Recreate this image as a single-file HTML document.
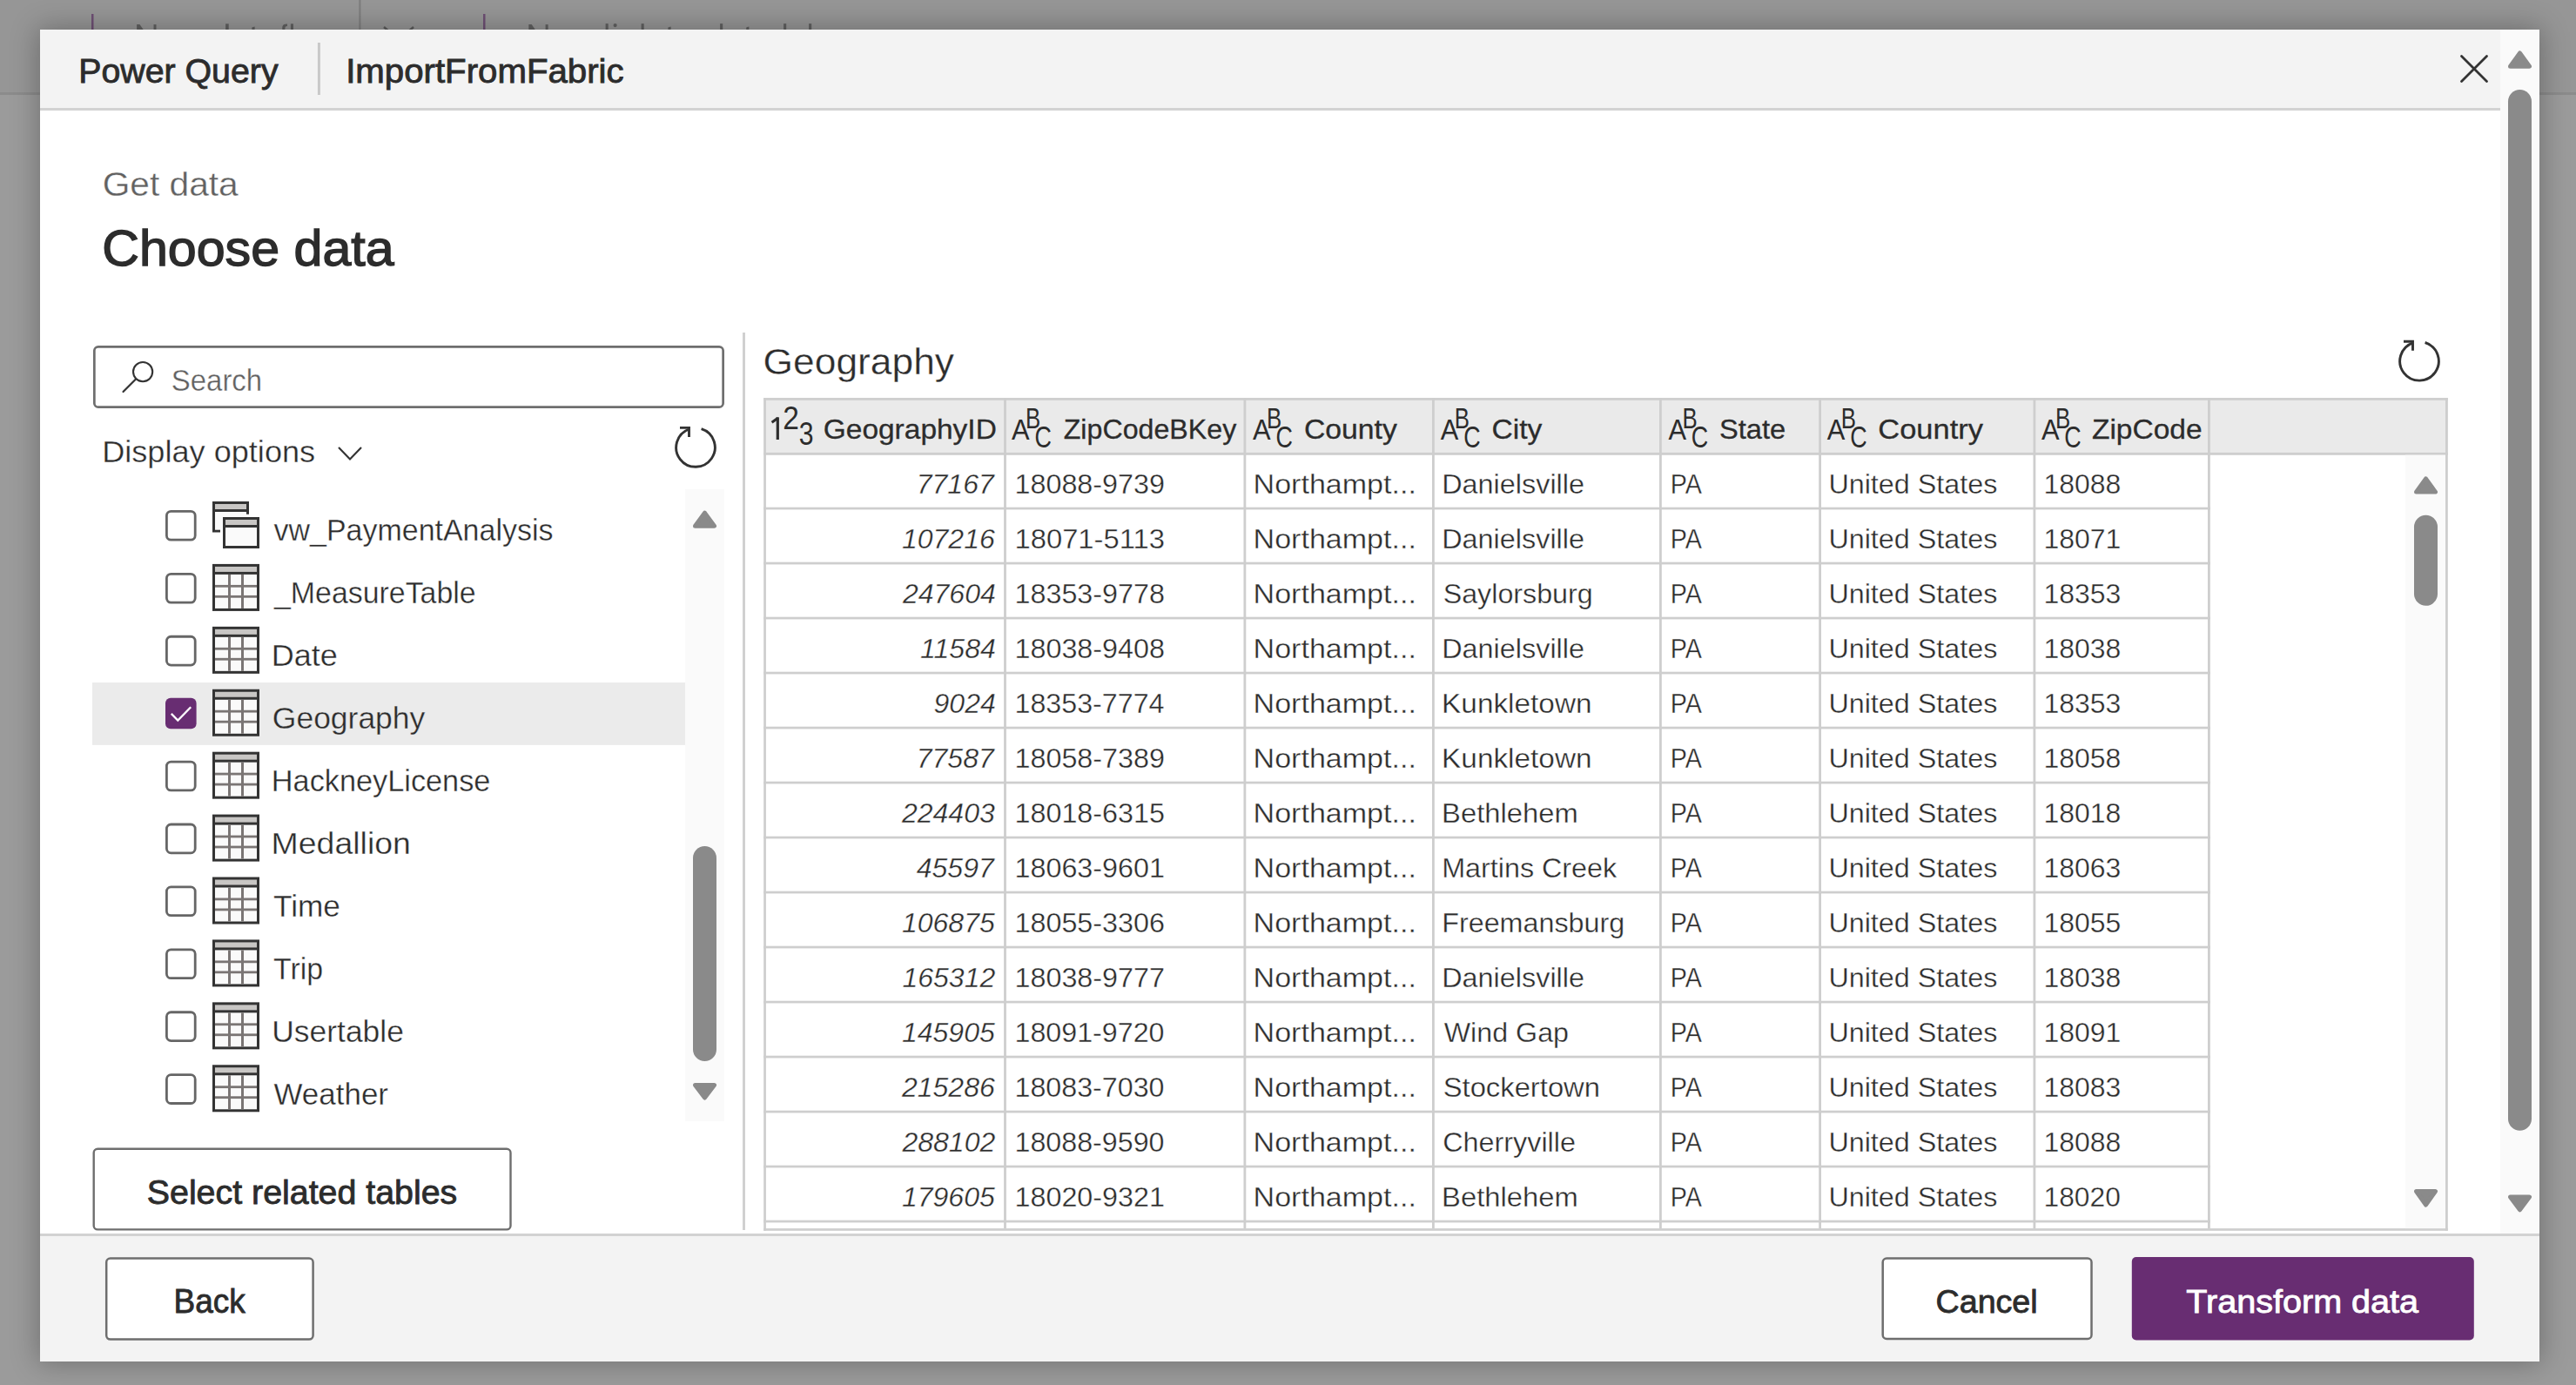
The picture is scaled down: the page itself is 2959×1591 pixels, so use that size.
<!DOCTYPE html>
<html><head><meta charset="utf-8"><title>Choose data</title>
<style>
html,body{margin:0;padding:0;}
body{width:2959px;height:1591px;overflow:hidden;background:#9b9b9b;position:relative;font-family:"Liberation Sans",sans-serif;}
#bg{position:absolute;left:0;top:0;}
#modal{position:absolute;left:46px;top:34px;width:2871px;height:1530px;background:#fff;box-shadow:0 0 30px 2px rgba(0,0,0,0.28);}
#fg{position:absolute;left:0;top:0;}
</style></head><body>
<svg id="bg" width="2959" height="1591" font-family="Liberation Sans"><rect x="0" y="0" width="2959" height="107" fill="#969696"/><rect x="0" y="106.2" width="2959" height="2.8" fill="#8b8b8b"/><rect x="105" y="16" width="2.5" height="30" fill="#6e4f74"/><rect x="555" y="16" width="2.5" height="30" fill="#6e4f74"/><rect x="412.3" y="0" width="2.2" height="60" fill="#7e7e7e"/><path d="M157.1 40 L157.1 28.1 L160.5 28.1 L166 36 L166 40 Z" fill="#606060"/><rect x="176.5" y="28.1" width="3" height="11.899999999999999" fill="#606060"/><rect x="259.1" y="27.3" width="3.6" height="12.7" fill="#606060"/><path d="M289.4 40 L289.4 31.5 L292.6 30.6 L292.6 40 Z" fill="#606060"/><path d="M324.3 40 L324.3 31 Q324.8 27.6 329.5 27.6 L330 27.6 L330 30 Q327.4 30 327.4 32 L327.4 40 Z" fill="#606060"/><rect x="333.9" y="27.3" width="3.1" height="12.7" fill="#606060"/><path d="M607.3 40 L607.3 28.1 L610.7 28.1 L616 36 L616 40 Z" fill="#606060"/><rect x="626.6" y="28.1" width="3" height="11.899999999999999" fill="#606060"/><rect x="695.6" y="27.1" width="3.1" height="12.899999999999999" fill="#606060"/><circle cx="706.6" cy="29.1" r="2.1" fill="#606060"/><rect x="736.6" y="27.1" width="3.1" height="12.899999999999999" fill="#606060"/><path d="M767.4 40 L767.4 31.5 L770.6 30.4 L770.6 40 Z" fill="#606060"/><rect x="827.1" y="27.1" width="3.1" height="12.899999999999999" fill="#606060"/><path d="M857.2 40 L857.2 31.5 L860.4 30.4 L860.4 40 Z" fill="#606060"/><rect x="900.1" y="27.1" width="3.1" height="12.899999999999999" fill="#606060"/><rect x="929.1" y="27.1" width="3.1" height="12.899999999999999" fill="#606060"/><path d="M441 31 L458 46 L475 31" stroke="#5c5c5c" stroke-width="2.5" fill="none"/></svg>
<div id="modal"></div>
<svg id="fg" width="2959" height="1591" font-family="Liberation Sans">
<rect x="46" y="34" width="2826" height="90" fill="#f3f3f3" />
<rect x="46" y="124" width="2826" height="3" fill="#d2d2d2" />
<rect x="364.9" y="49" width="3" height="60" fill="#c8c8c8" />
<path d="M2827.5 64.5 L2856.5 93.5 M2856.5 64.5 L2827.5 93.5" stroke="#333" stroke-width="2.8" stroke-linecap="round" fill="none"/>
<rect x="2872" y="34" width="45" height="1383" fill="#fafafa" />
<rect x="2881" y="103" width="27" height="1195.7" fill="#8a8a8a" rx="13.5"/>
<path d="M2894.50 61.00 L2905.50 76.20 L2883.50 76.20 Z" fill="#8a8a8a" stroke="#8a8a8a" stroke-width="5.0" stroke-linejoin="round"/>
<path d="M2894.50 1389.80 L2905.50 1375.00 L2883.50 1375.00 Z" fill="#8a8a8a" stroke="#8a8a8a" stroke-width="5.0" stroke-linejoin="round"/>
<rect x="108.35" y="398.35" width="722.3" height="69.3" rx="4.5" fill="#fff" stroke="#6e6e6e" stroke-width="2.7"/>
<circle cx="164.1" cy="427.1" r="11.1" fill="none" stroke="#333" stroke-width="2.1"/>
<path d="M156 435.5 L141.5 450" stroke="#333" stroke-width="2.2" stroke-linecap="round"/>
<path d="M389 514 L402 527.5 L415 514" stroke="#333" stroke-width="2.2" fill="none" stroke-linejoin="miter"/>
<path d="M805.60 492.70 A22.3 22.3 0 1 1 791.50 493.00" stroke="#333" stroke-width="2.9" fill="none"/><path d="M781.00 491.40 L791.50 491.40 L791.50 501.90" stroke="#333" stroke-width="2.9" fill="none" stroke-linejoin="miter"/>
<rect x="787" y="562" width="45" height="726" fill="#fafafa" />
<rect x="796" y="972" width="27" height="247" fill="#8a8a8a" rx="13.5"/>
<path d="M809.50 589.10 L820.50 604.20 L798.50 604.20 Z" fill="#8a8a8a" stroke="#8a8a8a" stroke-width="5.0" stroke-linejoin="round"/>
<path d="M809.50 1261.00 L820.50 1246.40 L798.50 1246.40 Z" fill="#8a8a8a" stroke="#8a8a8a" stroke-width="5.0" stroke-linejoin="round"/>
<rect x="106" y="783.96" width="681" height="71.92" fill="#ebebeb" />
<rect x="191.4" y="587.40" width="32.8" height="32.8" rx="5" fill="#fff" stroke="#666" stroke-width="2.8"/>
<path d="M244 576.0 H286 V590.8 H283 V588.0 H247 V608.4 H253 V611.4 H244 Z" fill="#333"/><rect x="247" y="579.0" width="36" height="6" fill="#c8c6c4"/><rect x="247" y="588.0" width="36" height="6" fill="#fafafa"/><rect x="247" y="588.0" width="9" height="20.4" fill="#fafafa"/><rect x="256" y="594.0" width="42" height="36" fill="#333"/><rect x="259" y="597.0" width="36" height="6" fill="#c8c6c4"/><rect x="259" y="606.0" width="36" height="21" fill="#fafafa"/>
<rect x="191.4" y="659.32" width="32.8" height="32.8" rx="5" fill="#fff" stroke="#666" stroke-width="2.8"/>
<rect x="244" y="647.92" width="54" height="54" fill="#333"/><rect x="247" y="650.92" width="48" height="6" fill="#c8c6c4"/><rect x="247" y="659.92" width="48" height="39" fill="#fafafa"/><rect x="262" y="659.92" width="3" height="39" fill="#7a7574"/><rect x="277" y="659.92" width="3" height="39" fill="#7a7574"/><rect x="247" y="671.92" width="48" height="2.8" fill="#7a7574"/><rect x="247" y="683.92" width="48" height="2.8" fill="#7a7574"/>
<rect x="191.4" y="731.24" width="32.8" height="32.8" rx="5" fill="#fff" stroke="#666" stroke-width="2.8"/>
<rect x="244" y="719.84" width="54" height="54" fill="#333"/><rect x="247" y="722.84" width="48" height="6" fill="#c8c6c4"/><rect x="247" y="731.84" width="48" height="39" fill="#fafafa"/><rect x="262" y="731.84" width="3" height="39" fill="#7a7574"/><rect x="277" y="731.84" width="3" height="39" fill="#7a7574"/><rect x="247" y="743.84" width="48" height="2.8" fill="#7a7574"/><rect x="247" y="755.84" width="48" height="2.8" fill="#7a7574"/>
<rect x="190" y="801.76" width="35.6" height="35.6" rx="6" fill="#682d72"/>
<path d="M196.8 819.86 L204.3 827.66 L219.2 812.26" stroke="#fff" stroke-width="2.3" fill="none"/>
<rect x="244" y="791.76" width="54" height="54" fill="#333"/><rect x="247" y="794.76" width="48" height="6" fill="#c8c6c4"/><rect x="247" y="803.76" width="48" height="39" fill="#fafafa"/><rect x="262" y="803.76" width="3" height="39" fill="#7a7574"/><rect x="277" y="803.76" width="3" height="39" fill="#7a7574"/><rect x="247" y="815.76" width="48" height="2.8" fill="#7a7574"/><rect x="247" y="827.76" width="48" height="2.8" fill="#7a7574"/>
<rect x="191.4" y="875.08" width="32.8" height="32.8" rx="5" fill="#fff" stroke="#666" stroke-width="2.8"/>
<rect x="244" y="863.6800000000001" width="54" height="54" fill="#333"/><rect x="247" y="866.6800000000001" width="48" height="6" fill="#c8c6c4"/><rect x="247" y="875.6800000000001" width="48" height="39" fill="#fafafa"/><rect x="262" y="875.6800000000001" width="3" height="39" fill="#7a7574"/><rect x="277" y="875.6800000000001" width="3" height="39" fill="#7a7574"/><rect x="247" y="887.6800000000001" width="48" height="2.8" fill="#7a7574"/><rect x="247" y="899.6800000000001" width="48" height="2.8" fill="#7a7574"/>
<rect x="191.4" y="947.00" width="32.8" height="32.8" rx="5" fill="#fff" stroke="#666" stroke-width="2.8"/>
<rect x="244" y="935.6" width="54" height="54" fill="#333"/><rect x="247" y="938.6" width="48" height="6" fill="#c8c6c4"/><rect x="247" y="947.6" width="48" height="39" fill="#fafafa"/><rect x="262" y="947.6" width="3" height="39" fill="#7a7574"/><rect x="277" y="947.6" width="3" height="39" fill="#7a7574"/><rect x="247" y="959.6" width="48" height="2.8" fill="#7a7574"/><rect x="247" y="971.6" width="48" height="2.8" fill="#7a7574"/>
<rect x="191.4" y="1018.92" width="32.8" height="32.8" rx="5" fill="#fff" stroke="#666" stroke-width="2.8"/>
<rect x="244" y="1007.52" width="54" height="54" fill="#333"/><rect x="247" y="1010.52" width="48" height="6" fill="#c8c6c4"/><rect x="247" y="1019.52" width="48" height="39" fill="#fafafa"/><rect x="262" y="1019.52" width="3" height="39" fill="#7a7574"/><rect x="277" y="1019.52" width="3" height="39" fill="#7a7574"/><rect x="247" y="1031.52" width="48" height="2.8" fill="#7a7574"/><rect x="247" y="1043.52" width="48" height="2.8" fill="#7a7574"/>
<rect x="191.4" y="1090.84" width="32.8" height="32.8" rx="5" fill="#fff" stroke="#666" stroke-width="2.8"/>
<rect x="244" y="1079.44" width="54" height="54" fill="#333"/><rect x="247" y="1082.44" width="48" height="6" fill="#c8c6c4"/><rect x="247" y="1091.44" width="48" height="39" fill="#fafafa"/><rect x="262" y="1091.44" width="3" height="39" fill="#7a7574"/><rect x="277" y="1091.44" width="3" height="39" fill="#7a7574"/><rect x="247" y="1103.44" width="48" height="2.8" fill="#7a7574"/><rect x="247" y="1115.44" width="48" height="2.8" fill="#7a7574"/>
<rect x="191.4" y="1162.76" width="32.8" height="32.8" rx="5" fill="#fff" stroke="#666" stroke-width="2.8"/>
<rect x="244" y="1151.36" width="54" height="54" fill="#333"/><rect x="247" y="1154.36" width="48" height="6" fill="#c8c6c4"/><rect x="247" y="1163.36" width="48" height="39" fill="#fafafa"/><rect x="262" y="1163.36" width="3" height="39" fill="#7a7574"/><rect x="277" y="1163.36" width="3" height="39" fill="#7a7574"/><rect x="247" y="1175.36" width="48" height="2.8" fill="#7a7574"/><rect x="247" y="1187.36" width="48" height="2.8" fill="#7a7574"/>
<rect x="191.4" y="1234.68" width="32.8" height="32.8" rx="5" fill="#fff" stroke="#666" stroke-width="2.8"/>
<rect x="244" y="1223.28" width="54" height="54" fill="#333"/><rect x="247" y="1226.28" width="48" height="6" fill="#c8c6c4"/><rect x="247" y="1235.28" width="48" height="39" fill="#fafafa"/><rect x="262" y="1235.28" width="3" height="39" fill="#7a7574"/><rect x="277" y="1235.28" width="3" height="39" fill="#7a7574"/><rect x="247" y="1247.28" width="48" height="2.8" fill="#7a7574"/><rect x="247" y="1259.28" width="48" height="2.8" fill="#7a7574"/>
<rect x="107.7" y="1319.7" width="478.8" height="92.7" rx="4.5" fill="#fff" stroke="#6e6e6e" stroke-width="2.4"/>
<rect x="853" y="382" width="3" height="1031" fill="#d0d0d0" />
<path d="M2785.60 393.50 A22.3 22.3 0 1 1 2771.50 393.80" stroke="#333" stroke-width="2.9" fill="none"/><path d="M2761.00 392.20 L2771.50 392.20 L2771.50 402.70" stroke="#333" stroke-width="2.9" fill="none" stroke-linejoin="miter"/>
<rect x="877.2" y="457.1" width="1934.6000000000001" height="65.60000000000002" fill="#eaeaea" />
<rect x="877.2" y="457.1" width="1934.6000000000001" height="2.7" fill="#cecece" />
<rect x="877.2" y="519.9" width="1934.6000000000001" height="2.8" fill="#cecece" />
<rect x="877.2" y="457.1" width="2.7" height="956.6999999999999" fill="#cecece" />
<rect x="2809" y="457.1" width="2.8" height="956.6999999999999" fill="#cecece" />
<rect x="877.2" y="1411.1" width="1934.6000000000001" height="2.7" fill="#cecece" />
<rect x="1153.1" y="457.1" width="2.8" height="953.9999999999999" fill="#cecece" />
<rect x="1428.5" y="457.1" width="2.8" height="953.9999999999999" fill="#cecece" />
<rect x="1645" y="457.1" width="2.8" height="953.9999999999999" fill="#cecece" />
<rect x="1906" y="457.1" width="2.8" height="953.9999999999999" fill="#cecece" />
<rect x="2089.2" y="457.1" width="2.8" height="953.9999999999999" fill="#cecece" />
<rect x="2335.5" y="457.1" width="2.8" height="953.9999999999999" fill="#cecece" />
<rect x="2536" y="457.1" width="2.8" height="953.9999999999999" fill="#cecece" />
<rect x="877.2" y="582.7" width="1661.6000000000001" height="2.7" fill="#cecece" />
<rect x="877.2" y="645.7" width="1661.6000000000001" height="2.7" fill="#cecece" />
<rect x="877.2" y="708.7" width="1661.6000000000001" height="2.7" fill="#cecece" />
<rect x="877.2" y="771.7" width="1661.6000000000001" height="2.7" fill="#cecece" />
<rect x="877.2" y="834.7" width="1661.6000000000001" height="2.7" fill="#cecece" />
<rect x="877.2" y="897.7" width="1661.6000000000001" height="2.7" fill="#cecece" />
<rect x="877.2" y="960.7" width="1661.6000000000001" height="2.7" fill="#cecece" />
<rect x="877.2" y="1023.7" width="1661.6000000000001" height="2.7" fill="#cecece" />
<rect x="877.2" y="1086.7" width="1661.6000000000001" height="2.7" fill="#cecece" />
<rect x="877.2" y="1149.7" width="1661.6000000000001" height="2.7" fill="#cecece" />
<rect x="877.2" y="1212.7" width="1661.6000000000001" height="2.7" fill="#cecece" />
<rect x="877.2" y="1275.7" width="1661.6000000000001" height="2.7" fill="#cecece" />
<rect x="877.2" y="1338.7" width="1661.6000000000001" height="2.7" fill="#cecece" />
<rect x="877.2" y="1401.7" width="1661.6000000000001" height="2.7" fill="#cecece" />
<rect x="2763" y="522.7" width="46" height="888.3999999999999" fill="#fafafa" />
<rect x="2773" y="591.7" width="27" height="104.09999999999991" fill="#8a8a8a" rx="13.5"/>
<path d="M2786.50 549.90 L2797.50 565.10 L2775.50 565.10 Z" fill="#8a8a8a" stroke="#8a8a8a" stroke-width="5.0" stroke-linejoin="round"/>
<path d="M2786.50 1384.00 L2797.50 1368.50 L2775.50 1368.50 Z" fill="#8a8a8a" stroke="#8a8a8a" stroke-width="5.0" stroke-linejoin="round"/>
<rect x="891.7" y="479.3" width="3.2" height="25.7" fill="#2c2c2c"/><path d="M893.5 480.3 L886.6 485.2" stroke="#2c2c2c" stroke-width="3"/>
<rect x="46" y="1417" width="2871" height="3" fill="#d2d2d2" />
<rect x="46" y="1420" width="2871" height="144" fill="#f3f3f3" />
<rect x="122.2" y="1445.5" width="237.4" height="93.1" rx="4.5" fill="#fff" stroke="#6e6e6e" stroke-width="2.5"/>
<rect x="2162.7" y="1445.6" width="239.8" height="92.4" rx="4.5" fill="#fff" stroke="#6e6e6e" stroke-width="2.5"/>
<rect x="2448.8" y="1444.1" width="393" height="95.4" fill="#682d72" rx="5"/>
<text x="90.23" y="95.10" font-size="38.12" fill="#2c2c2c" stroke="#2c2c2c" stroke-width="0.85" textLength="229.37" lengthAdjust="spacingAndGlyphs">Power Query</text>
<text x="397.16" y="95.10" font-size="38.12" fill="#2c2c2c" stroke="#2c2c2c" stroke-width="0.85" textLength="319.47" lengthAdjust="spacingAndGlyphs">ImportFromFabric</text>
<text x="117.69" y="224.60" font-size="39.61" fill="#616161" stroke="#ffffff" stroke-width="0.35" textLength="156.05" lengthAdjust="spacingAndGlyphs">Get data</text>
<text x="117.23" y="305.00" font-size="58.13" fill="#2c2c2c" stroke="#2c2c2c" stroke-width="1.40" textLength="335.40" lengthAdjust="spacingAndGlyphs">Choose data</text>
<text x="196.87" y="448.75" font-size="35.01" fill="#616161" stroke="#ffffff" stroke-width="0.35" textLength="104.28" lengthAdjust="spacingAndGlyphs">Search</text>
<text x="117.18" y="530.50" font-size="35.82" fill="#2c2c2c" stroke="#ffffff" stroke-width="0.35" textLength="244.95" lengthAdjust="spacingAndGlyphs">Display options</text>
<text x="314.50" y="621.40" font-size="35.42" fill="#2c2c2c" stroke="#ffffff" stroke-width="0.35" textLength="320.96" lengthAdjust="spacingAndGlyphs">vw_PaymentAnalysis</text>
<text x="315.03" y="693.32" font-size="35.42" fill="#2c2c2c" stroke="#ffffff" stroke-width="0.35" textLength="231.64" lengthAdjust="spacingAndGlyphs">_MeasureTable</text>
<text x="311.68" y="765.24" font-size="35.42" fill="#2c2c2c" stroke="#ffffff" stroke-width="0.35" textLength="76.29" lengthAdjust="spacingAndGlyphs">Date</text>
<text x="312.84" y="837.16" font-size="35.42" fill="#2c2c2c" stroke="#ebebeb" stroke-width="0.35" textLength="175.46" lengthAdjust="spacingAndGlyphs">Geography</text>
<text x="311.82" y="909.08" font-size="35.42" fill="#2c2c2c" stroke="#ffffff" stroke-width="0.35" textLength="251.57" lengthAdjust="spacingAndGlyphs">HackneyLicense</text>
<text x="311.57" y="981.00" font-size="35.42" fill="#2c2c2c" stroke="#ffffff" stroke-width="0.35" textLength="160.33" lengthAdjust="spacingAndGlyphs">Medallion</text>
<text x="313.95" y="1052.92" font-size="35.42" fill="#2c2c2c" stroke="#ffffff" stroke-width="0.35" textLength="76.98" lengthAdjust="spacingAndGlyphs">Time</text>
<text x="313.97" y="1124.84" font-size="35.42" fill="#2c2c2c" stroke="#ffffff" stroke-width="0.35" textLength="57.10" lengthAdjust="spacingAndGlyphs">Trip</text>
<text x="312.29" y="1196.76" font-size="35.42" fill="#2c2c2c" stroke="#ffffff" stroke-width="0.35" textLength="151.55" lengthAdjust="spacingAndGlyphs">Usertable</text>
<text x="314.50" y="1268.68" font-size="35.42" fill="#2c2c2c" stroke="#ffffff" stroke-width="0.35" textLength="131.47" lengthAdjust="spacingAndGlyphs">Weather</text>
<text x="168.77" y="1382.50" font-size="38.80" fill="#2c2c2c" stroke="#2c2c2c" stroke-width="0.85" textLength="356.46" lengthAdjust="spacingAndGlyphs">Select related tables</text>
<text x="876.62" y="430.40" font-size="42.44" fill="#2c2c2c" stroke="#ffffff" stroke-width="0.35" textLength="219.38" lengthAdjust="spacingAndGlyphs">Geography</text>
<text x="899.23" y="492.90" font-size="37.06" fill="#2c2c2c" textLength="18.63" lengthAdjust="spacingAndGlyphs">2</text>
<text x="917.86" y="510.60" font-size="37.06" fill="#2c2c2c" textLength="16.76" lengthAdjust="spacingAndGlyphs">3</text>
<text x="945.73" y="503.70" font-size="31.63" fill="#2c2c2c" stroke="#2c2c2c" stroke-width="0.30" textLength="199.13" lengthAdjust="spacingAndGlyphs">GeographyID</text>
<text x="1162.10" y="505.00" font-size="33.43" fill="#2c2c2c" textLength="20.55" lengthAdjust="spacingAndGlyphs">A</text>
<text x="1178.09" y="491.70" font-size="32.56" fill="#2c2c2c" textLength="17.20" lengthAdjust="spacingAndGlyphs">B</text>
<text x="1188.54" y="513.70" font-size="34.16" fill="#2c2c2c" textLength="19.39" lengthAdjust="spacingAndGlyphs">C</text>
<text x="1221.69" y="503.70" font-size="31.63" fill="#2c2c2c" stroke="#2c2c2c" stroke-width="0.30" textLength="198.61" lengthAdjust="spacingAndGlyphs">ZipCodeBKey</text>
<text x="1439.00" y="505.00" font-size="33.43" fill="#2c2c2c" textLength="20.55" lengthAdjust="spacingAndGlyphs">A</text>
<text x="1454.99" y="491.70" font-size="32.56" fill="#2c2c2c" textLength="17.20" lengthAdjust="spacingAndGlyphs">B</text>
<text x="1465.44" y="513.70" font-size="34.16" fill="#2c2c2c" textLength="19.39" lengthAdjust="spacingAndGlyphs">C</text>
<text x="1497.92" y="503.70" font-size="31.63" fill="#2c2c2c" stroke="#2c2c2c" stroke-width="0.30" textLength="106.88" lengthAdjust="spacingAndGlyphs">County</text>
<text x="1654.80" y="505.00" font-size="33.43" fill="#2c2c2c" textLength="20.55" lengthAdjust="spacingAndGlyphs">A</text>
<text x="1670.79" y="491.70" font-size="32.56" fill="#2c2c2c" textLength="17.20" lengthAdjust="spacingAndGlyphs">B</text>
<text x="1681.24" y="513.70" font-size="34.16" fill="#2c2c2c" textLength="19.39" lengthAdjust="spacingAndGlyphs">C</text>
<text x="1713.42" y="503.70" font-size="31.63" fill="#2c2c2c" stroke="#2c2c2c" stroke-width="0.30" textLength="57.88" lengthAdjust="spacingAndGlyphs">City</text>
<text x="1916.40" y="505.00" font-size="33.43" fill="#2c2c2c" textLength="20.55" lengthAdjust="spacingAndGlyphs">A</text>
<text x="1932.39" y="491.70" font-size="32.56" fill="#2c2c2c" textLength="17.20" lengthAdjust="spacingAndGlyphs">B</text>
<text x="1942.84" y="513.70" font-size="34.16" fill="#2c2c2c" textLength="19.39" lengthAdjust="spacingAndGlyphs">C</text>
<text x="1974.98" y="503.70" font-size="31.63" fill="#2c2c2c" stroke="#2c2c2c" stroke-width="0.30" textLength="76.14" lengthAdjust="spacingAndGlyphs">State</text>
<text x="2098.80" y="505.00" font-size="33.43" fill="#2c2c2c" textLength="20.55" lengthAdjust="spacingAndGlyphs">A</text>
<text x="2114.79" y="491.70" font-size="32.56" fill="#2c2c2c" textLength="17.20" lengthAdjust="spacingAndGlyphs">B</text>
<text x="2125.24" y="513.70" font-size="34.16" fill="#2c2c2c" textLength="19.39" lengthAdjust="spacingAndGlyphs">C</text>
<text x="2157.39" y="503.70" font-size="31.63" fill="#2c2c2c" stroke="#2c2c2c" stroke-width="0.30" textLength="120.51" lengthAdjust="spacingAndGlyphs">Country</text>
<text x="2344.90" y="505.00" font-size="33.43" fill="#2c2c2c" textLength="20.55" lengthAdjust="spacingAndGlyphs">A</text>
<text x="2360.89" y="491.70" font-size="32.56" fill="#2c2c2c" textLength="17.20" lengthAdjust="spacingAndGlyphs">B</text>
<text x="2371.34" y="513.70" font-size="34.16" fill="#2c2c2c" textLength="19.39" lengthAdjust="spacingAndGlyphs">C</text>
<text x="2402.95" y="503.70" font-size="31.63" fill="#2c2c2c" stroke="#2c2c2c" stroke-width="0.30" textLength="126.71" lengthAdjust="spacingAndGlyphs">ZipCode</text>
<text x="1052.71" y="566.80" font-size="32.04" fill="#2c2c2c" stroke="#ffffff" stroke-width="0.35" font-style="italic" textLength="89.09" lengthAdjust="spacingAndGlyphs">77167</text>
<text x="1165.48" y="566.80" font-size="32.04" fill="#2c2c2c" stroke="#ffffff" stroke-width="0.35" textLength="172.53" lengthAdjust="spacingAndGlyphs">18088-9739</text>
<text x="1439.64" y="566.80" font-size="32.04" fill="#2c2c2c" stroke="#ffffff" stroke-width="0.35" textLength="187.23" lengthAdjust="spacingAndGlyphs">Northampt...</text>
<text x="1656.17" y="566.80" font-size="32.04" fill="#2c2c2c" stroke="#ffffff" stroke-width="0.35" textLength="163.84" lengthAdjust="spacingAndGlyphs">Danielsville</text>
<text x="1918.75" y="566.80" font-size="32.04" fill="#2c2c2c" stroke="#ffffff" stroke-width="0.35" textLength="36.20" lengthAdjust="spacingAndGlyphs">PA</text>
<text x="2100.38" y="566.80" font-size="32.04" fill="#2c2c2c" stroke="#ffffff" stroke-width="0.35" textLength="193.93" lengthAdjust="spacingAndGlyphs">United States</text>
<text x="2347.61" y="566.80" font-size="32.04" fill="#2c2c2c" stroke="#ffffff" stroke-width="0.35" textLength="88.69" lengthAdjust="spacingAndGlyphs">18088</text>
<text x="1035.89" y="629.80" font-size="32.04" fill="#2c2c2c" stroke="#ffffff" stroke-width="0.35" font-style="italic" textLength="106.90" lengthAdjust="spacingAndGlyphs">107216</text>
<text x="1165.45" y="629.80" font-size="32.04" fill="#2c2c2c" stroke="#ffffff" stroke-width="0.35" textLength="172.58" lengthAdjust="spacingAndGlyphs">18071-5113</text>
<text x="1439.64" y="629.80" font-size="32.04" fill="#2c2c2c" stroke="#ffffff" stroke-width="0.35" textLength="187.23" lengthAdjust="spacingAndGlyphs">Northampt...</text>
<text x="1656.17" y="629.80" font-size="32.04" fill="#2c2c2c" stroke="#ffffff" stroke-width="0.35" textLength="163.84" lengthAdjust="spacingAndGlyphs">Danielsville</text>
<text x="1918.75" y="629.80" font-size="32.04" fill="#2c2c2c" stroke="#ffffff" stroke-width="0.35" textLength="36.20" lengthAdjust="spacingAndGlyphs">PA</text>
<text x="2100.38" y="629.80" font-size="32.04" fill="#2c2c2c" stroke="#ffffff" stroke-width="0.35" textLength="193.93" lengthAdjust="spacingAndGlyphs">United States</text>
<text x="2347.61" y="629.80" font-size="32.04" fill="#2c2c2c" stroke="#ffffff" stroke-width="0.35" textLength="88.69" lengthAdjust="spacingAndGlyphs">18071</text>
<text x="1036.90" y="692.80" font-size="32.04" fill="#2c2c2c" stroke="#ffffff" stroke-width="0.35" font-style="italic" textLength="106.90" lengthAdjust="spacingAndGlyphs">247604</text>
<text x="1165.48" y="692.80" font-size="32.04" fill="#2c2c2c" stroke="#ffffff" stroke-width="0.35" textLength="172.53" lengthAdjust="spacingAndGlyphs">18353-9778</text>
<text x="1439.64" y="692.80" font-size="32.04" fill="#2c2c2c" stroke="#ffffff" stroke-width="0.35" textLength="187.23" lengthAdjust="spacingAndGlyphs">Northampt...</text>
<text x="1657.69" y="692.80" font-size="32.04" fill="#2c2c2c" stroke="#ffffff" stroke-width="0.35" textLength="172.02" lengthAdjust="spacingAndGlyphs">Saylorsburg</text>
<text x="1918.75" y="692.80" font-size="32.04" fill="#2c2c2c" stroke="#ffffff" stroke-width="0.35" textLength="36.20" lengthAdjust="spacingAndGlyphs">PA</text>
<text x="2100.38" y="692.80" font-size="32.04" fill="#2c2c2c" stroke="#ffffff" stroke-width="0.35" textLength="193.93" lengthAdjust="spacingAndGlyphs">United States</text>
<text x="2347.61" y="692.80" font-size="32.04" fill="#2c2c2c" stroke="#ffffff" stroke-width="0.35" textLength="88.69" lengthAdjust="spacingAndGlyphs">18353</text>
<text x="1057.09" y="755.80" font-size="32.04" fill="#2c2c2c" stroke="#ffffff" stroke-width="0.35" font-style="italic" textLength="86.71" lengthAdjust="spacingAndGlyphs">11584</text>
<text x="1165.48" y="755.80" font-size="32.04" fill="#2c2c2c" stroke="#ffffff" stroke-width="0.35" textLength="172.53" lengthAdjust="spacingAndGlyphs">18038-9408</text>
<text x="1439.64" y="755.80" font-size="32.04" fill="#2c2c2c" stroke="#ffffff" stroke-width="0.35" textLength="187.23" lengthAdjust="spacingAndGlyphs">Northampt...</text>
<text x="1656.17" y="755.80" font-size="32.04" fill="#2c2c2c" stroke="#ffffff" stroke-width="0.35" textLength="163.84" lengthAdjust="spacingAndGlyphs">Danielsville</text>
<text x="1918.75" y="755.80" font-size="32.04" fill="#2c2c2c" stroke="#ffffff" stroke-width="0.35" textLength="36.20" lengthAdjust="spacingAndGlyphs">PA</text>
<text x="2100.38" y="755.80" font-size="32.04" fill="#2c2c2c" stroke="#ffffff" stroke-width="0.35" textLength="193.93" lengthAdjust="spacingAndGlyphs">United States</text>
<text x="2347.61" y="755.80" font-size="32.04" fill="#2c2c2c" stroke="#ffffff" stroke-width="0.35" textLength="88.69" lengthAdjust="spacingAndGlyphs">18038</text>
<text x="1072.53" y="818.80" font-size="32.04" fill="#2c2c2c" stroke="#ffffff" stroke-width="0.35" font-style="italic" textLength="71.27" lengthAdjust="spacingAndGlyphs">9024</text>
<text x="1165.49" y="818.80" font-size="32.04" fill="#2c2c2c" stroke="#ffffff" stroke-width="0.35" textLength="172.02" lengthAdjust="spacingAndGlyphs">18353-7774</text>
<text x="1439.64" y="818.80" font-size="32.04" fill="#2c2c2c" stroke="#ffffff" stroke-width="0.35" textLength="187.23" lengthAdjust="spacingAndGlyphs">Northampt...</text>
<text x="1656.09" y="818.80" font-size="32.04" fill="#2c2c2c" stroke="#ffffff" stroke-width="0.35" textLength="172.48" lengthAdjust="spacingAndGlyphs">Kunkletown</text>
<text x="1918.75" y="818.80" font-size="32.04" fill="#2c2c2c" stroke="#ffffff" stroke-width="0.35" textLength="36.20" lengthAdjust="spacingAndGlyphs">PA</text>
<text x="2100.38" y="818.80" font-size="32.04" fill="#2c2c2c" stroke="#ffffff" stroke-width="0.35" textLength="193.93" lengthAdjust="spacingAndGlyphs">United States</text>
<text x="2347.61" y="818.80" font-size="32.04" fill="#2c2c2c" stroke="#ffffff" stroke-width="0.35" textLength="88.69" lengthAdjust="spacingAndGlyphs">18353</text>
<text x="1052.71" y="881.80" font-size="32.04" fill="#2c2c2c" stroke="#ffffff" stroke-width="0.35" font-style="italic" textLength="89.09" lengthAdjust="spacingAndGlyphs">77587</text>
<text x="1165.48" y="881.80" font-size="32.04" fill="#2c2c2c" stroke="#ffffff" stroke-width="0.35" textLength="172.53" lengthAdjust="spacingAndGlyphs">18058-7389</text>
<text x="1439.64" y="881.80" font-size="32.04" fill="#2c2c2c" stroke="#ffffff" stroke-width="0.35" textLength="187.23" lengthAdjust="spacingAndGlyphs">Northampt...</text>
<text x="1656.09" y="881.80" font-size="32.04" fill="#2c2c2c" stroke="#ffffff" stroke-width="0.35" textLength="172.48" lengthAdjust="spacingAndGlyphs">Kunkletown</text>
<text x="1918.75" y="881.80" font-size="32.04" fill="#2c2c2c" stroke="#ffffff" stroke-width="0.35" textLength="36.20" lengthAdjust="spacingAndGlyphs">PA</text>
<text x="2100.38" y="881.80" font-size="32.04" fill="#2c2c2c" stroke="#ffffff" stroke-width="0.35" textLength="193.93" lengthAdjust="spacingAndGlyphs">United States</text>
<text x="2347.61" y="881.80" font-size="32.04" fill="#2c2c2c" stroke="#ffffff" stroke-width="0.35" textLength="88.69" lengthAdjust="spacingAndGlyphs">18058</text>
<text x="1035.89" y="944.80" font-size="32.04" fill="#2c2c2c" stroke="#ffffff" stroke-width="0.35" font-style="italic" textLength="106.90" lengthAdjust="spacingAndGlyphs">224403</text>
<text x="1165.48" y="944.80" font-size="32.04" fill="#2c2c2c" stroke="#ffffff" stroke-width="0.35" textLength="172.53" lengthAdjust="spacingAndGlyphs">18018-6315</text>
<text x="1439.64" y="944.80" font-size="32.04" fill="#2c2c2c" stroke="#ffffff" stroke-width="0.35" textLength="187.23" lengthAdjust="spacingAndGlyphs">Northampt...</text>
<text x="1656.14" y="944.80" font-size="32.04" fill="#2c2c2c" stroke="#ffffff" stroke-width="0.35" textLength="156.55" lengthAdjust="spacingAndGlyphs">Bethlehem</text>
<text x="1918.75" y="944.80" font-size="32.04" fill="#2c2c2c" stroke="#ffffff" stroke-width="0.35" textLength="36.20" lengthAdjust="spacingAndGlyphs">PA</text>
<text x="2100.38" y="944.80" font-size="32.04" fill="#2c2c2c" stroke="#ffffff" stroke-width="0.35" textLength="193.93" lengthAdjust="spacingAndGlyphs">United States</text>
<text x="2347.61" y="944.80" font-size="32.04" fill="#2c2c2c" stroke="#ffffff" stroke-width="0.35" textLength="88.69" lengthAdjust="spacingAndGlyphs">18018</text>
<text x="1052.71" y="1007.80" font-size="32.04" fill="#2c2c2c" stroke="#ffffff" stroke-width="0.35" font-style="italic" textLength="89.09" lengthAdjust="spacingAndGlyphs">45597</text>
<text x="1165.48" y="1007.80" font-size="32.04" fill="#2c2c2c" stroke="#ffffff" stroke-width="0.35" textLength="172.53" lengthAdjust="spacingAndGlyphs">18063-9601</text>
<text x="1439.64" y="1007.80" font-size="32.04" fill="#2c2c2c" stroke="#ffffff" stroke-width="0.35" textLength="187.23" lengthAdjust="spacingAndGlyphs">Northampt...</text>
<text x="1656.18" y="1007.80" font-size="32.04" fill="#2c2c2c" stroke="#ffffff" stroke-width="0.35" textLength="201.02" lengthAdjust="spacingAndGlyphs">Martins Creek</text>
<text x="1918.75" y="1007.80" font-size="32.04" fill="#2c2c2c" stroke="#ffffff" stroke-width="0.35" textLength="36.20" lengthAdjust="spacingAndGlyphs">PA</text>
<text x="2100.38" y="1007.80" font-size="32.04" fill="#2c2c2c" stroke="#ffffff" stroke-width="0.35" textLength="193.93" lengthAdjust="spacingAndGlyphs">United States</text>
<text x="2347.61" y="1007.80" font-size="32.04" fill="#2c2c2c" stroke="#ffffff" stroke-width="0.35" textLength="88.69" lengthAdjust="spacingAndGlyphs">18063</text>
<text x="1035.89" y="1070.80" font-size="32.04" fill="#2c2c2c" stroke="#ffffff" stroke-width="0.35" font-style="italic" textLength="106.90" lengthAdjust="spacingAndGlyphs">106875</text>
<text x="1165.48" y="1070.80" font-size="32.04" fill="#2c2c2c" stroke="#ffffff" stroke-width="0.35" textLength="172.53" lengthAdjust="spacingAndGlyphs">18055-3306</text>
<text x="1439.64" y="1070.80" font-size="32.04" fill="#2c2c2c" stroke="#ffffff" stroke-width="0.35" textLength="187.23" lengthAdjust="spacingAndGlyphs">Northampt...</text>
<text x="1656.18" y="1070.80" font-size="32.04" fill="#2c2c2c" stroke="#ffffff" stroke-width="0.35" textLength="210.14" lengthAdjust="spacingAndGlyphs">Freemansburg</text>
<text x="1918.75" y="1070.80" font-size="32.04" fill="#2c2c2c" stroke="#ffffff" stroke-width="0.35" textLength="36.20" lengthAdjust="spacingAndGlyphs">PA</text>
<text x="2100.38" y="1070.80" font-size="32.04" fill="#2c2c2c" stroke="#ffffff" stroke-width="0.35" textLength="193.93" lengthAdjust="spacingAndGlyphs">United States</text>
<text x="2347.61" y="1070.80" font-size="32.04" fill="#2c2c2c" stroke="#ffffff" stroke-width="0.35" textLength="88.69" lengthAdjust="spacingAndGlyphs">18055</text>
<text x="1036.39" y="1133.80" font-size="32.04" fill="#2c2c2c" stroke="#ffffff" stroke-width="0.35" font-style="italic" textLength="106.90" lengthAdjust="spacingAndGlyphs">165312</text>
<text x="1165.48" y="1133.80" font-size="32.04" fill="#2c2c2c" stroke="#ffffff" stroke-width="0.35" textLength="172.53" lengthAdjust="spacingAndGlyphs">18038-9777</text>
<text x="1439.64" y="1133.80" font-size="32.04" fill="#2c2c2c" stroke="#ffffff" stroke-width="0.35" textLength="187.23" lengthAdjust="spacingAndGlyphs">Northampt...</text>
<text x="1656.17" y="1133.80" font-size="32.04" fill="#2c2c2c" stroke="#ffffff" stroke-width="0.35" textLength="163.84" lengthAdjust="spacingAndGlyphs">Danielsville</text>
<text x="1918.75" y="1133.80" font-size="32.04" fill="#2c2c2c" stroke="#ffffff" stroke-width="0.35" textLength="36.20" lengthAdjust="spacingAndGlyphs">PA</text>
<text x="2100.38" y="1133.80" font-size="32.04" fill="#2c2c2c" stroke="#ffffff" stroke-width="0.35" textLength="193.93" lengthAdjust="spacingAndGlyphs">United States</text>
<text x="2347.61" y="1133.80" font-size="32.04" fill="#2c2c2c" stroke="#ffffff" stroke-width="0.35" textLength="88.69" lengthAdjust="spacingAndGlyphs">18038</text>
<text x="1035.89" y="1196.80" font-size="32.04" fill="#2c2c2c" stroke="#ffffff" stroke-width="0.35" font-style="italic" textLength="106.90" lengthAdjust="spacingAndGlyphs">145905</text>
<text x="1165.49" y="1196.80" font-size="32.04" fill="#2c2c2c" stroke="#ffffff" stroke-width="0.35" textLength="172.02" lengthAdjust="spacingAndGlyphs">18091-9720</text>
<text x="1439.64" y="1196.80" font-size="32.04" fill="#2c2c2c" stroke="#ffffff" stroke-width="0.35" textLength="187.23" lengthAdjust="spacingAndGlyphs">Northampt...</text>
<text x="1658.70" y="1196.80" font-size="32.04" fill="#2c2c2c" stroke="#ffffff" stroke-width="0.35" textLength="143.31" lengthAdjust="spacingAndGlyphs">Wind Gap</text>
<text x="1918.75" y="1196.80" font-size="32.04" fill="#2c2c2c" stroke="#ffffff" stroke-width="0.35" textLength="36.20" lengthAdjust="spacingAndGlyphs">PA</text>
<text x="2100.38" y="1196.80" font-size="32.04" fill="#2c2c2c" stroke="#ffffff" stroke-width="0.35" textLength="193.93" lengthAdjust="spacingAndGlyphs">United States</text>
<text x="2347.61" y="1196.80" font-size="32.04" fill="#2c2c2c" stroke="#ffffff" stroke-width="0.35" textLength="88.69" lengthAdjust="spacingAndGlyphs">18091</text>
<text x="1035.89" y="1259.80" font-size="32.04" fill="#2c2c2c" stroke="#ffffff" stroke-width="0.35" font-style="italic" textLength="106.90" lengthAdjust="spacingAndGlyphs">215286</text>
<text x="1165.49" y="1259.80" font-size="32.04" fill="#2c2c2c" stroke="#ffffff" stroke-width="0.35" textLength="172.02" lengthAdjust="spacingAndGlyphs">18083-7030</text>
<text x="1439.64" y="1259.80" font-size="32.04" fill="#2c2c2c" stroke="#ffffff" stroke-width="0.35" textLength="187.23" lengthAdjust="spacingAndGlyphs">Northampt...</text>
<text x="1657.68" y="1259.80" font-size="32.04" fill="#2c2c2c" stroke="#ffffff" stroke-width="0.35" textLength="180.36" lengthAdjust="spacingAndGlyphs">Stockertown</text>
<text x="1918.75" y="1259.80" font-size="32.04" fill="#2c2c2c" stroke="#ffffff" stroke-width="0.35" textLength="36.20" lengthAdjust="spacingAndGlyphs">PA</text>
<text x="2100.38" y="1259.80" font-size="32.04" fill="#2c2c2c" stroke="#ffffff" stroke-width="0.35" textLength="193.93" lengthAdjust="spacingAndGlyphs">United States</text>
<text x="2347.61" y="1259.80" font-size="32.04" fill="#2c2c2c" stroke="#ffffff" stroke-width="0.35" textLength="88.69" lengthAdjust="spacingAndGlyphs">18083</text>
<text x="1036.39" y="1322.80" font-size="32.04" fill="#2c2c2c" stroke="#ffffff" stroke-width="0.35" font-style="italic" textLength="106.90" lengthAdjust="spacingAndGlyphs">288102</text>
<text x="1165.49" y="1322.80" font-size="32.04" fill="#2c2c2c" stroke="#ffffff" stroke-width="0.35" textLength="172.02" lengthAdjust="spacingAndGlyphs">18088-9590</text>
<text x="1439.64" y="1322.80" font-size="32.04" fill="#2c2c2c" stroke="#ffffff" stroke-width="0.35" textLength="187.23" lengthAdjust="spacingAndGlyphs">Northampt...</text>
<text x="1657.18" y="1322.80" font-size="32.04" fill="#2c2c2c" stroke="#ffffff" stroke-width="0.35" textLength="152.83" lengthAdjust="spacingAndGlyphs">Cherryville</text>
<text x="1918.75" y="1322.80" font-size="32.04" fill="#2c2c2c" stroke="#ffffff" stroke-width="0.35" textLength="36.20" lengthAdjust="spacingAndGlyphs">PA</text>
<text x="2100.38" y="1322.80" font-size="32.04" fill="#2c2c2c" stroke="#ffffff" stroke-width="0.35" textLength="193.93" lengthAdjust="spacingAndGlyphs">United States</text>
<text x="2347.61" y="1322.80" font-size="32.04" fill="#2c2c2c" stroke="#ffffff" stroke-width="0.35" textLength="88.69" lengthAdjust="spacingAndGlyphs">18088</text>
<text x="1035.89" y="1385.80" font-size="32.04" fill="#2c2c2c" stroke="#ffffff" stroke-width="0.35" font-style="italic" textLength="106.90" lengthAdjust="spacingAndGlyphs">179605</text>
<text x="1165.48" y="1385.80" font-size="32.04" fill="#2c2c2c" stroke="#ffffff" stroke-width="0.35" textLength="172.53" lengthAdjust="spacingAndGlyphs">18020-9321</text>
<text x="1439.64" y="1385.80" font-size="32.04" fill="#2c2c2c" stroke="#ffffff" stroke-width="0.35" textLength="187.23" lengthAdjust="spacingAndGlyphs">Northampt...</text>
<text x="1656.14" y="1385.80" font-size="32.04" fill="#2c2c2c" stroke="#ffffff" stroke-width="0.35" textLength="156.55" lengthAdjust="spacingAndGlyphs">Bethlehem</text>
<text x="1918.75" y="1385.80" font-size="32.04" fill="#2c2c2c" stroke="#ffffff" stroke-width="0.35" textLength="36.20" lengthAdjust="spacingAndGlyphs">PA</text>
<text x="2100.38" y="1385.80" font-size="32.04" fill="#2c2c2c" stroke="#ffffff" stroke-width="0.35" textLength="193.93" lengthAdjust="spacingAndGlyphs">United States</text>
<text x="2347.62" y="1385.80" font-size="32.04" fill="#2c2c2c" stroke="#ffffff" stroke-width="0.35" textLength="88.17" lengthAdjust="spacingAndGlyphs">18020</text>
<text x="199.51" y="1508.30" font-size="39.34" fill="#2c2c2c" stroke="#2c2c2c" stroke-width="0.85" textLength="82.21" lengthAdjust="spacingAndGlyphs">Back</text>
<text x="2223.54" y="1507.60" font-size="37.58" fill="#2c2c2c" stroke="#2c2c2c" stroke-width="0.85" textLength="117.14" lengthAdjust="spacingAndGlyphs">Cancel</text>
<text x="2511.38" y="1507.60" font-size="37.58" fill="#ffffff" stroke="#ffffff" stroke-width="0.85" textLength="266.67" lengthAdjust="spacingAndGlyphs">Transform data</text>

</svg>
</body></html>
